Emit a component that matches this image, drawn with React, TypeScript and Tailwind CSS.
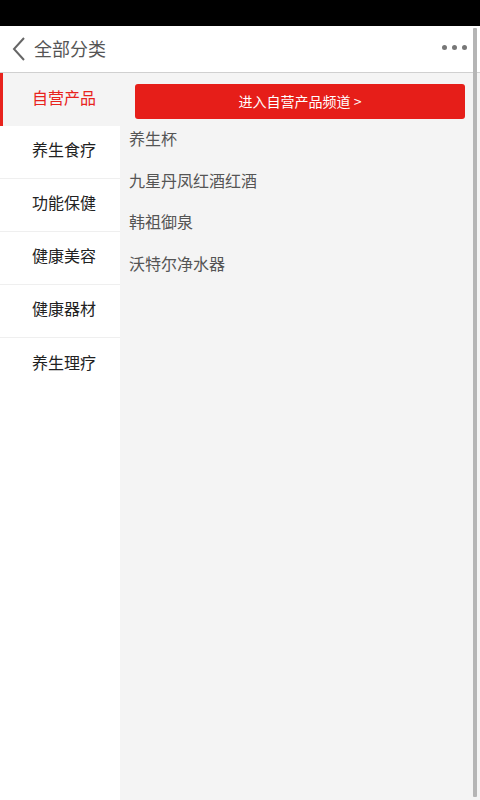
import React from 'react'

const sideItems = ['自营产品', '养生食疗', '功能保健', '健康美容', '健康器材', '养生理疗']
const subItems = ['养生杯', '九星丹凤红酒红酒', '韩祖御泉', '沃特尔净水器']

export default function App() {
  return (
    <div
      className="relative w-[480px] h-[800px] overflow-hidden bg-white flex flex-col"
      style={{ fontFamily: '"Noto Sans CJK SC", "Noto Sans", sans-serif' }}
    >
      {/* status bar */}
      <div className="h-[26px] bg-black shrink-0" />

      {/* header */}
      <div className="h-[47px] shrink-0 flex items-center bg-white border-b border-[#d0d0d0] pb-[3px]">
        <svg width="16" height="26" viewBox="0 0 16 26" className="ml-[11px] mt-[2px]">
          <polyline points="13,2 3,13 13,24" fill="none" stroke="#666" strokeWidth="2" />
        </svg>
        <span className="ml-[7px] text-[18px] text-[#555] leading-none">全部分类</span>
        <div className="ml-auto mr-[13px] flex gap-[5px]">
          <span className="w-[5px] h-[5px] rounded-full bg-[#777]" />
          <span className="w-[5px] h-[5px] rounded-full bg-[#777]" />
          <span className="w-[5px] h-[5px] rounded-full bg-[#777]" />
        </div>
      </div>

      {/* body */}
      <div className="flex-1 flex">
        <div className="w-[120px] bg-white flex flex-col">
          {sideItems.map((t, i) => (
            <div
              key={t}
              className={
                i === 0
                  ? 'h-[53px] flex items-center pl-[29px] pb-[6px] bg-[#f4f4f4] border-l-[3px] border-[#e8231d] text-[#e8231d] text-[16px]'
                  : i === sideItems.length - 1
                    ? 'h-[53px] flex items-center pl-[32px] pb-[6px] text-[#222] text-[16px]'
                    : 'h-[53px] flex items-center pl-[32px] pb-[6px] border-b border-[#efefef] text-[#222] text-[16px]'
              }
            >
              {t}
            </div>
          ))}
        </div>
        <div className="flex-1 bg-[#f4f4f4] flex flex-col">
          <div className="mt-[11px] mb-[-2px] ml-[15px] mr-[15px] h-[35px] rounded-[3px] bg-[#e61e19] flex items-center justify-center text-white text-[14px]">
            进入自营产品频道 &gt;
          </div>
          {subItems.map((t) => (
            <div key={t} className="h-[41.7px] flex items-center pl-[9px] text-[16px] text-[#555]">
              {t}
            </div>
          ))}
        </div>
      </div>

      {/* scrollbar */}
      <div className="absolute right-[3px] top-[28px] bottom-[3px] w-[4px] bg-[#b5b5b5] rounded-[1px]" />
    </div>
  )
}
